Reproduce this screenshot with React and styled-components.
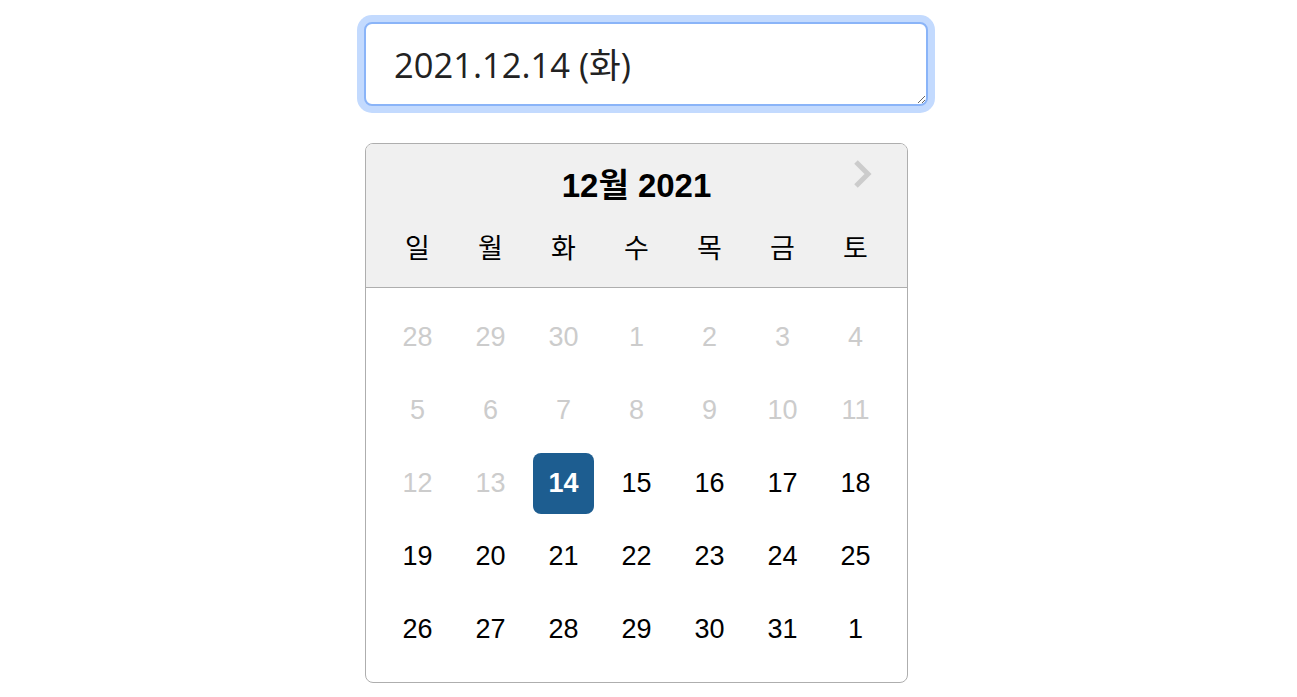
import React from 'react';
import styled, { createGlobalStyle } from 'styled-components';

const GlobalStyle = createGlobalStyle`
  html, body {
    margin: 0;
    padding: 0;
    background: #fff;
  }
`;

const Page = styled.div`
  width: 564px;
  margin-left: 364px;
  padding-top: 22px;
  display: flex;
  flex-direction: column;
`;

const DateInput = styled.textarea`
  box-sizing: border-box;
  width: 564px;
  height: 84px;
  padding: 19px 28px 10px;
  border: 2px solid #8ab4f8;
  border-radius: 8px;
  box-shadow: 0 0 0 7px #c3dafe;
  font-family: "Open Sans", "Noto Sans CJK KR", sans-serif;
  font-size: 34.5px;
  line-height: 1.3;
  color: #222;
  outline: none;
  resize: both;
`;

const Calendar = styled.div`
  position: relative;
  box-sizing: border-box;
  width: 543px;
  margin: 37px 0 0 1px;
  border: 1px solid #aeaeae;
  border-radius: 8px;
  overflow: hidden;
  font-family: "Liberation Sans", "Noto Sans CJK KR", Arial, sans-serif;
  background: #fff;
`;

const Header = styled.div`
  background: #f0f0f0;
  border-bottom: 1px solid #aeaeae;
  padding: 22px 15px 10px;
`;

const Title = styled.div`
  text-align: center;
  font-size: 33px;
  font-weight: bold;
  line-height: 40px;
  color: #000;
`;

const NextButton = styled.svg`
  position: absolute;
  top: 14px;
  left: 484px;
`;

const Week = styled.div`
  display: grid;
  grid-template-columns: repeat(7, 73px);
  grid-auto-rows: ${p => p.$row || 73}px;
  align-items: center;
  justify-items: center;
  margin-top: ${p => p.$gap || 0}px;
`;

const DayName = styled.div`
  font-family: "Noto Sans CJK KR", "Liberation Sans", sans-serif;
  font-size: 27px;
  line-height: 60px;
  color: #000;
`;

const Month = styled.div`
  padding: 13px 15px 16px;
`;

const Day = styled.div`
  width: 61px;
  height: 61px;
  display: flex;
  align-items: center;
  justify-content: center;
  border-radius: 8px;
  font-size: 27px;
  color: ${p => (p.$muted ? '#cccccc' : '#000')};
  background: ${p => (p.$selected ? '#1d5d90' : 'transparent')};
  ${p => p.$selected && 'color: #fff; font-weight: bold;'}
`;

const dayNames = ['일', '월', '화', '수', '목', '금', '토'];

const weeks = [
  [28, 29, 30, 1, 2, 3, 4],
  [5, 6, 7, 8, 9, 10, 11],
  [12, 13, 14, 15, 16, 17, 18],
  [19, 20, 21, 22, 23, 24, 25],
  [26, 27, 28, 29, 30, 31, 1],
];

export default function App() {
  return (
    <>
      <GlobalStyle />
      <Page>
        <DateInput readOnly defaultValue="2021.12.14 (화)" />
        <Calendar>
          <Header>
            <Title>12월 2021</Title>
            <Week $row={60} $gap={11}>
              {dayNames.map(n => (
                <DayName key={n}>{n}</DayName>
              ))}
            </Week>
          </Header>
          <NextButton width="26" height="32" viewBox="0 0 26 32">
            <polyline points="6,4 18,16 6,28" fill="none" stroke="#cccccc" strokeWidth="5" />
          </NextButton>
          <Month>
            {weeks.map((w, wi) => (
              <Week key={wi}>
                {w.map((d, di) => {
                  const idx = wi * 7 + di;
                  return (
                    <Day key={di} $muted={idx < 16} $selected={idx === 16}>
                      {d}
                    </Day>
                  );
                })}
              </Week>
            ))}
          </Month>
        </Calendar>
      </Page>
    </>
  );
}
